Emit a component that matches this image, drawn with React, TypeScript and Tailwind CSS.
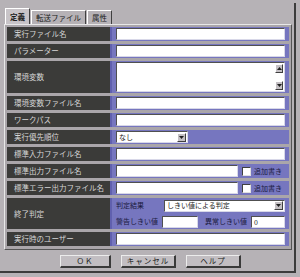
import React from 'react';

const font = { fontFamily: '"Noto Sans CJK JP", "Liberation Sans", sans-serif' };

const Label: React.FC<{ text: string }> = ({ text }) => (
  <div className="w-[103px] shrink-0 bg-[#3b3b39] text-[#d6d6d6] text-[7.5px] flex items-center pl-[7px]">
    {text}
  </div>
);

const Input: React.FC<{ w?: string; value?: string }> = ({ w = 'flex-1', value = '' }) => (
  <div className={`${w} h-[12px] bg-white border-t border-l border-[#505050] border-r border-b border-r-[#d8d8e8] border-b-[#d8d8e8] text-[7px] text-[#222] pl-[2px] leading-[10px]`}>
    {value}
  </div>
);

const DropArrow: React.FC = () => (
  <div className="w-[9px] h-[9px] bg-[#c4c0c4] border-t border-l border-white border-r border-b border-r-[#404040] border-b-[#404040] flex items-center justify-center">
    <svg width="5" height="3" viewBox="0 0 5 3"><path d="M0 0h5L2.5 3z" fill="#202020" /></svg>
  </div>
);

const Select: React.FC<{ w: string; value: string }> = ({ w, value }) => (
  <div className={`${w} h-[12px] bg-white border-t border-l border-[#505050] border-r border-b border-r-[#d8d8e8] border-b-[#d8d8e8] flex items-center justify-between text-[7px] text-[#222] pl-[2px] pr-[1px]`}>
    <span>{value}</span>
    <DropArrow />
  </div>
);

const Check: React.FC = () => (
  <div className="flex items-center gap-[3px] pl-[4px] pr-[3px]">
    <div className="w-[9px] h-[9px] bg-white border-t border-l border-[#404040] border-r border-b border-r-[#e0e0e0] border-b-[#e0e0e0]" />
    <span className="text-[7px] text-[#1a1a40]">追加書き</span>
  </div>
);

const Row: React.FC<{ label: string; h?: string; children: React.ReactNode }> = ({ label, h = 'h-[14px]', children }) => (
  <div className={`flex ${h}`}>
    <Label text={label} />
    <div className="flex-1 bg-[#7676bf] border-l-2 border-[#6060ae] flex items-center pl-[4px] pr-[4px]">
      {children}
    </div>
  </div>
);

const Button: React.FC<{ text: string; w: string }> = ({ text, w }) => (
  <div className={`${w} h-[13px] bg-[#c2bec2] border-t border-l border-[#ececec] border-r-2 border-b-2 border-r-[#3a3a3a] border-b-[#3a3a3a] flex items-center justify-center text-[7.5px] text-[#202020] tracking-[1px]`}>
    {text}
  </div>
);

export default function App() {
  return (
    <div className="w-[300px] h-[277px] bg-[#b6b2b6] pt-[3px] overflow-hidden" style={font}>
      <div className="w-[296px] h-[270px] border-r-2 border-b-2 border-[#3c3c3c] pl-[4px] pt-[5px] flex flex-col">
        {/* tabs */}
        <div className="flex items-end h-[16px] pl-[1px]">
          <div className="h-[16px] px-[4px] bg-[#c8c4c8] border-t border-l border-white border-r border-r-[#404040] text-[7.5px] font-bold text-[#202020] flex items-center">定義</div>
          <div className="h-[14px] px-[4px] ml-[1px] bg-[#b6b2b6] border-t border-l border-white border-r border-r-[#404040] text-[7.5px] text-[#202020] flex items-center">転送ファイル</div>
          <div className="h-[14px] px-[4px] ml-[1px] bg-[#b6b2b6] border-t border-l border-white border-r border-r-[#404040] text-[7.5px] text-[#202020] flex items-center">属性</div>
        </div>
        {/* panel */}
        <div className="w-[288px] h-[226px] bg-[#aaa6aa] border-t border-l border-[#e8e8e8] border-r border-b border-r-[#555] border-b-[#555] p-[2px] flex flex-col gap-[3px]">
          <Row label="実行ファイル名"><Input /></Row>
          <Row label="パラメーター"><Input /></Row>
          <Row label="環境変数" h="h-[32px]">
            <div className="flex-1 h-[30px] bg-white border-t border-l border-[#505050] border-r border-b border-r-[#d8d8e8] border-b-[#d8d8e8] flex justify-end">
              <div className="flex flex-col justify-between py-[1px] pr-[1px]">
                <div className="w-[8px] h-[9px] bg-[#c4c0c4] border-t border-l border-white border-r border-b border-r-[#404040] border-b-[#404040] flex items-center justify-center">
                  <svg width="5" height="3" viewBox="0 0 5 3"><path d="M0 3h5L2.5 0z" fill="#202020" /></svg>
                </div>
                <div className="w-[8px] h-[9px] bg-[#c4c0c4] border-t border-l border-white border-r border-b border-r-[#404040] border-b-[#404040] flex items-center justify-center">
                  <svg width="5" height="3" viewBox="0 0 5 3"><path d="M0 0h5L2.5 3z" fill="#202020" /></svg>
                </div>
              </div>
            </div>
          </Row>
          <Row label="環境変数ファイル名"><Input /></Row>
          <Row label="ワークパス"><Input /></Row>
          <Row label="実行優先順位"><Select w="w-[72px]" value="なし" /></Row>
          <Row label="標準入力ファイル名"><Input /></Row>
          <Row label="標準出力ファイル名"><Input /><Check /></Row>
          <Row label="標準エラー出力ファイル名"><Input /><Check /></Row>
          <Row label="終了判定" h="h-[31px]">
            <div className="flex-1 flex flex-col gap-[4px] text-[7px] text-[#1a1a40]">
              <div className="flex items-center">
                <span className="w-[48px]">判定結果</span>
                <Select w="flex-1" value="しきい値による判定" />
              </div>
              <div className="flex items-center">
                <span className="w-[46px]">警告しきい値</span>
                <Input w="w-[36px]" />
                <span className="ml-[7px] w-[46px]">異常しきい値</span>
                <Input w="flex-1" value="0" />
              </div>
            </div>
          </Row>
          <Row label="実行時のユーザー"><Input /></Row>
        </div>
        {/* buttons */}
        <div className="flex mt-[5px] pl-[56px] gap-[10px]">
          <Button text="ＯＫ" w="w-[51px]" />
          <Button text="キャンセル" w="w-[55px]" />
          <Button text="ヘルプ" w="w-[55px]" />
        </div>
      </div>
    </div>
  );
}
